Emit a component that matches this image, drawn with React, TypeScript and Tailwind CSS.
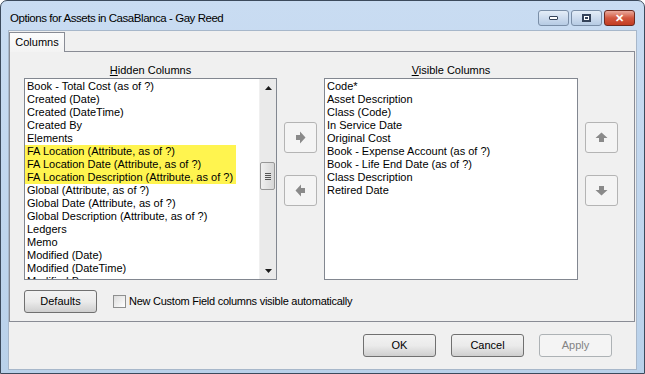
import React from 'react'

const HIDDEN = [
  'Book - Total Cost (as of ?)',
  'Created (Date)',
  'Created (DateTime)',
  'Created By',
  'Elements',
  'FA Location (Attribute, as of ?)',
  'FA Location Date (Attribute, as of ?)',
  'FA Location Description (Attribute, as of ?)',
  'Global (Attribute, as of ?)',
  'Global Date (Attribute, as of ?)',
  'Global Description (Attribute, as of ?)',
  'Ledgers',
  'Memo',
  'Modified (Date)',
  'Modified (DateTime)',
  'Modified By',
]

const VISIBLE = [
  'Code*',
  'Asset Description',
  'Class (Code)',
  'In Service Date',
  'Original Cost',
  'Book - Expense Account (as of ?)',
  'Book - Life End Date (as of ?)',
  'Class Description',
  'Retired Date',
]

const HIGHLIGHT = [5, 6, 7]

const FONT = { fontFamily: '"Liberation Sans", Arial, sans-serif' }

function Arrow({ dir }: { dir: 'left' | 'right' | 'up' | 'down' }) {
  const rot = { right: 0, down: 90, left: 180, up: 270 }[dir]
  return (
    <svg width="13" height="13" viewBox="0 0 13 13" style={{ transform: `rotate(${rot}deg)` }}>
      <polygon points="2,4 6,4 6,0.5 11.5,6.5 6,12.5 6,9 2,9" fill="#8a8a8a" />
    </svg>
  )
}

function SideButton({ dir }: { dir: 'left' | 'right' | 'up' | 'down' }) {
  return (
    <div className="w-[33px] h-[31px] flex items-center justify-center rounded-[3px] border border-[#b4b4b4] bg-[#f4f4f4]">
      <Arrow dir={dir} />
    </div>
  )
}

function PushButton({ label, disabled }: { label: string; disabled?: boolean }) {
  return (
    <div
      className={
        disabled
          ? 'w-[73px] h-[23px] flex items-center justify-center rounded-[3px] border border-[#adb2b5] bg-[#f4f4f4] text-[11px] text-[#838383]'
          : 'w-[73px] h-[23px] flex items-center justify-center rounded-[3px] border border-[#707070] bg-gradient-to-b from-[#f2f2f2] via-[#ebebeb] to-[#cfcfcf] text-[11px] text-black'
      }
    >
      {label}
    </div>
  )
}

function ScrollBar() {
  return (
    <div className="w-[17px] h-full flex flex-col bg-[#eaeaea] border-l border-[#f0f0f0]">
      <div className="h-[17px] flex items-center justify-center">
        <svg width="7" height="4" viewBox="0 0 7 4">
          <polygon points="3.5,0 7,4 0,4" fill="#1a1a1a" />
        </svg>
      </div>
      <div className="h-[66px]" />
      <div className="w-[15px] h-[28px] flex items-center justify-center rounded-[2px] border border-[#979797] bg-gradient-to-r from-[#f0f0f0] to-[#d6d6d6]">
        <div className="flex flex-col gap-[1px]">
          <div className="w-[6px] h-[1px] bg-[#555]" />
          <div className="w-[6px] h-[1px] bg-[#555]" />
          <div className="w-[6px] h-[1px] bg-[#555]" />
          <div className="w-[6px] h-[1px] bg-[#555]" />
        </div>
      </div>
      <div className="flex-1" />
      <div className="h-[17px] flex items-center justify-center">
        <svg width="7" height="4" viewBox="0 0 7 4">
          <polygon points="0,0 7,0 3.5,4" fill="#1a1a1a" />
        </svg>
      </div>
    </div>
  )
}

export default function App() {
  return (
    <div className="w-[645px] h-[374px] bg-white overflow-hidden" style={FONT}>
      {/* Window frame */}
      <div className="w-full h-full flex flex-col rounded-t-[7px] border border-[#3c4a5c] bg-gradient-to-b from-[#c9dcf2] to-[#b9d1ea] px-[7px] pb-[3px]">
        {/* Title bar */}
        <div className="h-[29px] flex items-start justify-between">
          <span className="pl-[2px] pt-[10px] text-[11.5px] leading-[14px] tracking-[-0.45px] text-black">
            Options for Assets in CasaBlanca - Gay Reed
          </span>
          <div className="flex gap-[2px] mt-[9px] mr-[2px]">
            <div className="w-[31px] h-[16px] flex items-center justify-center rounded-[3px] border border-[#7a8ea7] bg-gradient-to-b from-[#e4edf8] to-[#b6cbe4]">
              <div className="w-[9px] h-[4px] rounded-[1px] border border-[#34435a] bg-white" />
            </div>
            <div className="w-[31px] h-[16px] flex items-center justify-center rounded-[3px] border border-[#7a8ea7] bg-gradient-to-b from-[#e4edf8] to-[#b6cbe4]">
              <div className="w-[9px] h-[8px] border-[2px] border-[#34435a] bg-white flex items-center justify-center">
                <div className="w-[3px] h-[2px] bg-[#34435a]" />
              </div>
            </div>
            <div className="w-[31px] h-[16px] flex items-center justify-center rounded-[3px] border border-[#6d2a20] bg-gradient-to-b from-[#e9a99c] via-[#d2573f] to-[#c23c23]">
              <span className="text-white text-[11px] font-bold leading-none">✕</span>
            </div>
          </div>
        </div>

        {/* Client area */}
        <div className="flex-1 flex flex-col bg-[#f0f0f0] border border-[#a7b7ca]">
          {/* Tab */}
          <div className="h-[20px] flex items-end">
            <div className="w-[56px] h-[20px] flex items-center justify-center border border-b-0 border-[#898c95] bg-gradient-to-b from-[#fcfcfc] to-[#f3f3f3] text-[11px] text-black relative z-10 mb-[-1px]">
              Columns
            </div>
          </div>
          {/* Tab page */}
          <div className="w-[626px] h-[271px] border border-[#898c95] bg-[#f0f0f0] flex flex-col pl-[14px] pt-[11px]">
            <div className="flex items-start">
              <div className="flex flex-col w-[253px]">
                <div className="h-[14px] leading-[14px] text-center text-[11px] text-black">
                  <span className="underline">H</span>idden Columns
                </div>
                <div className="mt-[1px] h-[202px] border border-[#828790] bg-white flex">
                  <div className="flex-1 overflow-hidden pt-[1px] pl-[2px]">
                    {HIDDEN.map((h, i) => (
                      <div
                        key={h}
                        className={
                          HIGHLIGHT.includes(i)
                            ? 'h-[13px] leading-[13px] text-[11px] text-black whitespace-nowrap bg-[#fff44f] -ml-[2px] pl-[2px] w-[211px]'
                            : 'h-[13px] leading-[13px] text-[11px] text-black whitespace-nowrap'
                        }
                      >
                        {h}
                      </div>
                    ))}
                  </div>
                  <ScrollBar />
                </div>
              </div>

              <div className="ml-[7px] mt-[59px] flex flex-col gap-[22px]">
                <SideButton dir="right" />
                <SideButton dir="left" />
              </div>

              <div className="ml-[7px] flex flex-col w-[254px]">
                <div className="h-[14px] leading-[14px] text-center text-[11px] text-black">
                  <span className="underline">V</span>isible Columns
                </div>
                <div className="mt-[1px] h-[202px] border border-[#828790] bg-white pt-[1px] pl-[2px] overflow-hidden">
                  {VISIBLE.map(v => (
                    <div key={v} className="h-[13px] leading-[13px] text-[11px] text-black whitespace-nowrap">
                      {v}
                    </div>
                  ))}
                </div>
              </div>

              <div className="ml-[7px] mt-[59px] flex flex-col gap-[22px]">
                <SideButton dir="up" />
                <SideButton dir="down" />
              </div>
            </div>

            <div className="mt-[10px] flex items-center">
              <PushButton label="Defaults" />
              <div className="ml-[16px] w-[13px] h-[13px] border border-[#8e8f8f] bg-gradient-to-br from-[#dcdcdc] to-[#ffffff]" />
              <span className="ml-[3px] text-[11px] tracking-[-0.25px] text-black">
                New Custom Field columns visible automatically
              </span>
            </div>
          </div>

          {/* Bottom buttons */}
          <div className="flex-1 flex items-center justify-end gap-[15px] pr-[24px]">
            <PushButton label="OK" />
            <PushButton label="Cancel" />
            <PushButton label="Apply" disabled />
          </div>
        </div>
      </div>
    </div>
  )
}
